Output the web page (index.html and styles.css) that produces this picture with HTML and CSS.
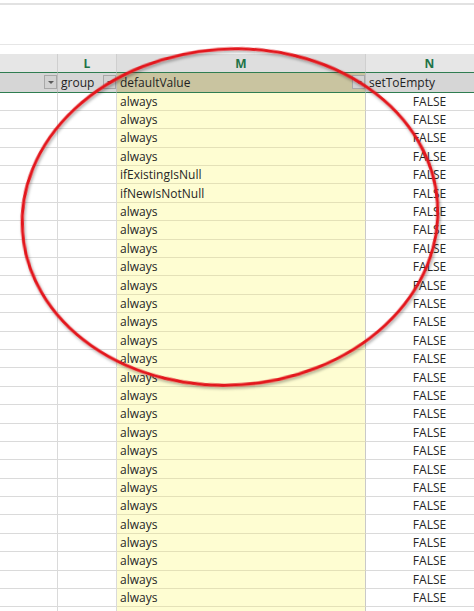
FILE: index.html
```html
<!DOCTYPE html>
<html>
<head>
<meta charset="utf-8">
<link rel="stylesheet" href="styles.css">
</head>
<body>
<div class="page">
  <div class="top">
    <div class="topline"></div>
    <div class="topline second"></div>
  </div>
  <div class="sheet">
    <div class="hdr"></div>
    <div class="hdr">L</div>
    <div class="hdr sel">M</div>
    <div class="hdr">N</div>

    <div class="flt"><span class="dd"></span></div>
    <div class="flt"><span class="lbl">group</span><span class="dd"></span></div>
    <div class="flt tan"><span class="lbl">defaultValue</span><span class="dd"></span></div>
    <div class="flt"><span class="lbl">setToEmpty</span></div>
  </div>
  <div class="data" id="data">
    <div class="c"></div><div class="c"></div><div class="c m">always</div><div class="c n">FALSE</div>
    <div class="c"></div><div class="c"></div><div class="c m">always</div><div class="c n">FALSE</div>
    <div class="c"></div><div class="c"></div><div class="c m">always</div><div class="c n">FALSE</div>
    <div class="c"></div><div class="c"></div><div class="c m">always</div><div class="c n">FALSE</div>
    <div class="c"></div><div class="c"></div><div class="c m">ifExistingIsNull</div><div class="c n">FALSE</div>
    <div class="c"></div><div class="c"></div><div class="c m">ifNewIsNotNull</div><div class="c n">FALSE</div>
    <div class="c"></div><div class="c"></div><div class="c m">always</div><div class="c n">FALSE</div>
    <div class="c"></div><div class="c"></div><div class="c m">always</div><div class="c n">FALSE</div>
    <div class="c"></div><div class="c"></div><div class="c m">always</div><div class="c n">FALSE</div>
    <div class="c"></div><div class="c"></div><div class="c m">always</div><div class="c n">FALSE</div>
    <div class="c"></div><div class="c"></div><div class="c m">always</div><div class="c n">FALSE</div>
    <div class="c"></div><div class="c"></div><div class="c m">always</div><div class="c n">FALSE</div>
    <div class="c"></div><div class="c"></div><div class="c m">always</div><div class="c n">FALSE</div>
    <div class="c"></div><div class="c"></div><div class="c m">always</div><div class="c n">FALSE</div>
    <div class="c"></div><div class="c"></div><div class="c m">always</div><div class="c n">FALSE</div>
    <div class="c"></div><div class="c"></div><div class="c m">always</div><div class="c n">FALSE</div>
    <div class="c"></div><div class="c"></div><div class="c m">always</div><div class="c n">FALSE</div>
    <div class="c"></div><div class="c"></div><div class="c m">always</div><div class="c n">FALSE</div>
    <div class="c"></div><div class="c"></div><div class="c m">always</div><div class="c n">FALSE</div>
    <div class="c"></div><div class="c"></div><div class="c m">always</div><div class="c n">FALSE</div>
    <div class="c"></div><div class="c"></div><div class="c m">always</div><div class="c n">FALSE</div>
    <div class="c"></div><div class="c"></div><div class="c m">always</div><div class="c n">FALSE</div>
    <div class="c"></div><div class="c"></div><div class="c m">always</div><div class="c n">FALSE</div>
    <div class="c"></div><div class="c"></div><div class="c m">always</div><div class="c n">FALSE</div>
    <div class="c"></div><div class="c"></div><div class="c m">always</div><div class="c n">FALSE</div>
    <div class="c"></div><div class="c"></div><div class="c m">always</div><div class="c n">FALSE</div>
    <div class="c"></div><div class="c"></div><div class="c m">always</div><div class="c n">FALSE</div>
    <div class="c"></div><div class="c"></div><div class="c m">always</div><div class="c n">FALSE</div>
    <div class="c"></div><div class="c"></div><div class="c m"></div><div class="c n"></div>
  </div>
  <svg class="ring" width="474" height="611" viewBox="0 0 474 611">
    <defs>
      <filter id="sh" x="-10%" y="-10%" width="120%" height="120%">
        <feDropShadow dx="1" dy="2" stdDeviation="1.5" flood-color="#000" flood-opacity="0.35"/>
      </filter>
    </defs>
    <ellipse cx="230" cy="217" rx="208" ry="168" transform="rotate(-4 230 217)" fill="none" stroke="#e3161c" stroke-width="3" filter="url(#sh)"/>
  </svg>
</div>
</body>
</html>
```
FILE: styles.css
```css
html, body {
  margin: 0;
  padding: 0;
  background: #fff;
}
.page {
  position: relative;
  width: 474px;
  height: 611px;
  overflow: hidden;
  font-family: "Open Sans", "Liberation Sans", sans-serif;
  font-size: 12px;
  color: #262626;
}
.top {
  height: 54px;
  display: flex;
  flex-direction: column;
}
.topline {
  margin-top: 3px;
  height: 2px;
  background: #e2e2e2;
}
.topline.second {
  margin-top: 39px;
  height: 1px;
  background: #e6e6e6;
}
.sheet, .data {
  display: grid;
  grid-template-columns: 58px 59px 249px 128px;
  width: 494px;
}
.hdr {
  height: 19px;
  box-sizing: border-box;
  background: #e6e6e6;
  border-right: 1px solid #cfcfcf;
  color: #217346;
  font-weight: 700;
  font-size: 12px;
  display: flex;
  align-items: center;
  justify-content: center;
  border-bottom: 1.5px solid #2f7d51;
}
.hdr.sel {
  background: #dedede;
}
.flt {
  height: 19.5px;
  box-sizing: border-box;
  background: #d6d6d6;
  border-right: 1px solid #bdbdbd;
  border-bottom: 1.5px solid #2f7d51;
  display: flex;
  align-items: center;
  padding-left: 3px;
  color: #1f1f1f;
}
.flt.tan {
  background: #c9c4a0;
}
.flt .lbl {
  flex: 1;
}
.dd {
  width: 13px;
  height: 14px;
  box-sizing: border-box;
  border: 1px solid #a8a8a8;
  background: #d2d2d2;
  position: relative;
  flex: none;
  margin-left: auto;
}
.dd::after {
  content: "";
  position: absolute;
  left: 3px;
  top: 5px;
  border-left: 3px solid transparent;
  border-right: 3px solid transparent;
  border-top: 3px solid #5a5a5a;
}
.data {
  grid-auto-rows: 18.4px;
}
.c {
  box-sizing: border-box;
  border-right: 1px solid #dadada;
  border-bottom: 1px solid #dadada;
  display: flex;
  align-items: center;
  padding-left: 3px;
  white-space: nowrap;
}
.c.m {
  background: #fefdd2;
  border-right: 1px solid #c9c9c9;
  border-bottom: 1px solid #e4e1b8;
  color: #262626;
}
.c.n {
  justify-content: center;
  padding: 0;
}
.ring {
  position: absolute;
  left: 0;
  top: 0;
  pointer-events: none;
}
```
